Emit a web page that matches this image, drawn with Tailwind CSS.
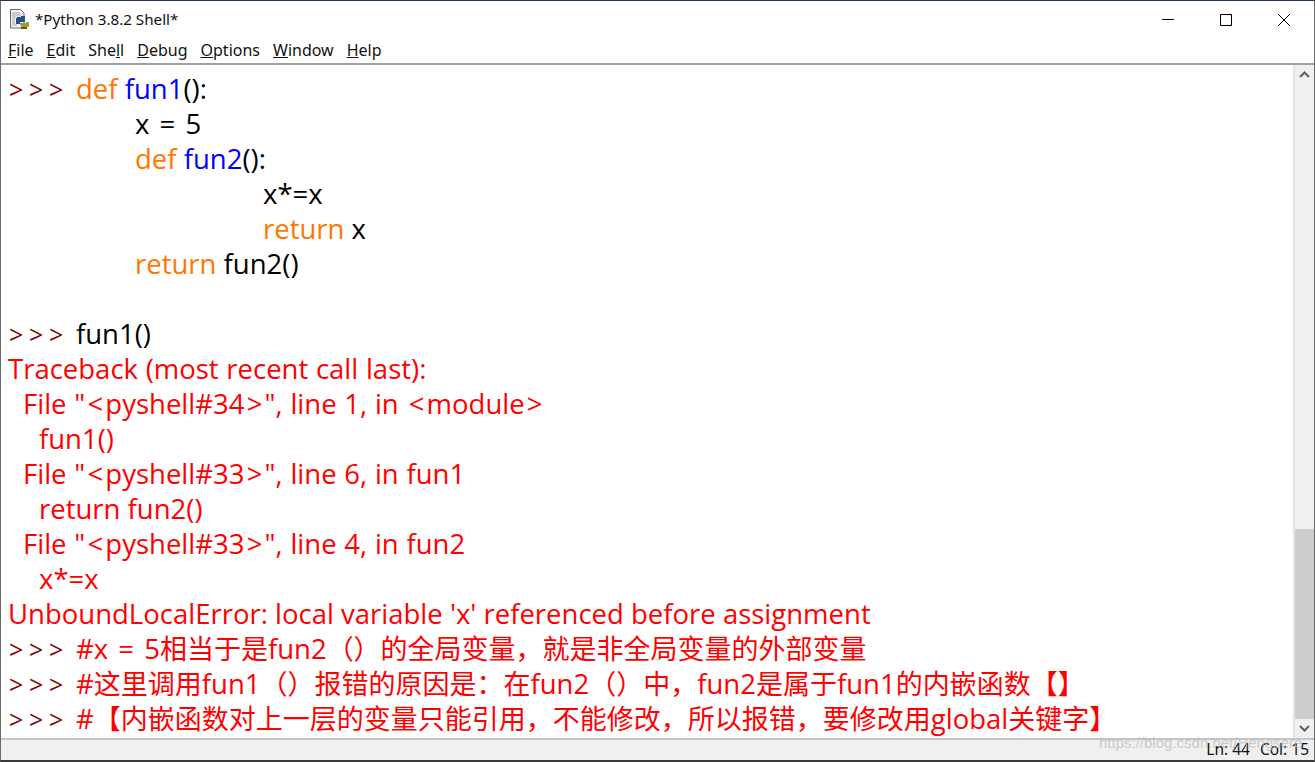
<!DOCTYPE html>
<html lang="en">
<head>
    <meta charset="UTF-8">
    <title>*Python 3.8.2 Shell*</title>
    <script src="https://cdn.jsdelivr.net/npm/@tailwindcss/browser@4"></script>
</head>
<body class="w-[1315px] h-[762px] overflow-hidden bg-white font-['Open_Sans','Noto_Sans_CJK_SC',sans-serif]">

<div class="flex flex-col h-[762px] border-t border-t-[#1f3556] border-x border-x-[#6b6b6b] border-b-2 border-b-[#3a3a3a]">

    <!-- title bar -->
    <div class="flex items-center h-[36px] pl-[9px] bg-white">
        <svg class="w-[20px] h-[21px]" viewBox="0 0 20 21">
            <path d="M.5.5h10l3.500 3.500v15H.5z" fill="#f4f4f4" stroke="#666"/>
            <path d="M2 4h8M2 6h9M2 8h4M2 10h3M2 12h3M2 14h3M2 16h5" stroke="#a5a5a5"/>
            <path d="M8 8h5a2 2 0 0 1 2 2v3h-5v2H6v-5a2 2 0 0 1 2-2z" fill="#234f8e"/>
            <path d="M11 7h4v2h-4z" fill="#234f8e"/>
            <path d="M16 13h2a1 1 0 0 1 1 1v3a1 1 0 0 1-1 1h-7v-2h-1v-2h6z" fill="#a39a2c"/>
            <path d="M11 18h6v2h-6z" fill="#5c5f1c"/>
        </svg>
        <span class="ml-[5px] text-[15.200px] text-[#111] font-['Noto_Sans',sans-serif]">*Python 3.8.2 Shell*</span>
        <div class="ml-auto flex items-center">
            <svg class="w-[58px] h-[36px]" viewBox="0 0 58 36"><path d="M23 18.500h12" stroke="#000"/></svg>
            <svg class="w-[58px] h-[36px]" viewBox="0 0 58 36"><path d="M23.500 13.500h11v11h-11z" fill="none" stroke="#000"/></svg>
            <svg class="w-[58px] h-[36px] mr-[1px]" viewBox="0 0 58 36"><path d="M23 13l12 12M35 13L23 25" stroke="#000"/></svg>
        </div>
    </div>

    <!-- menu bar -->
    <div class="flex items-center h-[26px] pl-[7px] gap-[13px] text-[16px] text-[#111] font-['Noto_Sans',sans-serif]">
        <span><u>F</u>ile</span>
        <span><u>E</u>dit</span>
        <span>She<u>l</u>l</span>
        <span><u>D</u>ebug</span>
        <span><u>O</u>ptions</span>
        <span><u>W</u>indow</span>
        <span><u>H</u>elp</span>
    </div>

    <!-- editor and scrollbar -->
    <div class="flex flex-1 min-h-0 border-t-2 border-t-[#a0a0a0]">
        <div class="flex-1 pt-[6px] text-[27.500px] leading-[35px] text-[#ff0000] overflow-hidden border-r-2 border-r-[#e3e3e3] [&>div]:whitespace-pre [&>div]:h-[35px]">
            <div class="pl-[8px]"><span class="inline-block w-[67px] text-[25px] tracking-[-0.4px] text-[#7f0000]">&gt; &gt; &gt;</span><span class="text-[#ff7700]">def</span> <span class="text-[#0000ff]">fun1</span><span class="text-black">():</span></div>
            <div class="pl-[134px] text-black [word-spacing:3px]">x = 5</div>
            <div class="pl-[134px] text-black"><span class="text-[#ff7700]">def</span> <span class="text-[#0000ff]">fun2</span>():</div>
            <div class="pl-[262px] text-black">x*=x</div>
            <div class="pl-[262px] text-black"><span class="text-[#ff7700]">return</span> x</div>
            <div class="pl-[134px] text-black"><span class="text-[#ff7700]">return</span> fun2()</div>
            <div></div>
            <div class="pl-[8px]"><span class="inline-block w-[67px] text-[25px] tracking-[-0.4px] text-[#7f0000]">&gt; &gt; &gt;</span><span class="text-black">fun1()</span></div>
            <div class="pl-[7px] [word-spacing:0.5px]">Traceback (most recent call last):</div>
            <div class="pl-[22px] [word-spacing:0.6px]">File "<span class="px-[2.200px]">&lt;</span>pyshell#34<span class="px-[2.200px]">&gt;</span>", line 1, in <span class="px-[2.200px]">&lt;</span>module<span class="px-[2.200px]">&gt;</span></div>
            <div class="pl-[38px]">fun1()</div>
            <div class="pl-[22px] [word-spacing:0.6px]">File "<span class="px-[2.200px]">&lt;</span>pyshell#33<span class="px-[2.200px]">&gt;</span>", line 6, in fun1</div>
            <div class="pl-[38px]">return fun2()</div>
            <div class="pl-[22px] [word-spacing:0.6px]">File "<span class="px-[2.200px]">&lt;</span>pyshell#33<span class="px-[2.200px]">&gt;</span>", line 4, in fun2</div>
            <div class="pl-[38px]">x*=x</div>
            <div class="pl-[7px]">UnboundLocalError: local variable 'x' referenced before assignment</div>
            <div class="pl-[8px]"><span class="inline-block w-[67px] text-[25px] tracking-[-0.4px] text-[#7f0000]">&gt; &gt; &gt;</span><span class="[word-spacing:3px]">#x = 5</span><span class="text-[27px]">相当于是</span>fun2<span class="text-[27px]">（）的全局变量，就是非全局变量的外部变量</span></div>
            <div class="pl-[8px]"><span class="inline-block w-[67px] text-[25px] tracking-[-0.4px] text-[#7f0000]">&gt; &gt; &gt;</span>#<span class="text-[27px]">这里调用</span>fun1<span class="text-[27px]">（）报错的原因是：在</span>fun2<span class="text-[27px]">（）中，</span>fun2<span class="text-[27px]">是属于</span>fun1<span class="text-[27px]">的内嵌函数【】</span></div>
            <div class="pl-[8px]"><span class="inline-block w-[67px] text-[25px] tracking-[-0.4px] text-[#7f0000]">&gt; &gt; &gt;</span>#<span class="text-[27px]">【内嵌函数对上一层的变量只能引用，不能修改，所以报错，要修改用</span>global<span class="text-[27px]">关键字】</span></div>
        </div>
        <div class="flex flex-col w-[19px] bg-[#f0f0f0]">
            <svg class="w-[19px] h-[19px]" viewBox="0 0 19 19"><path d="M5 12l4.500-4.500L14 12" fill="none" stroke="#606060" stroke-width="2"/></svg>
            <div class="flex-1"></div>
            <div class="h-[190px] bg-[#cdcdcd]"></div>
            <svg class="w-[19px] h-[19px]" viewBox="0 0 19 19"><path d="M5 7l4.500 4.500L14 7" fill="none" stroke="#606060" stroke-width="2"/></svg>
        </div>
    </div>

    <!-- status bar -->
    <div class="relative flex items-center justify-end h-[22px] pr-[5px] gap-[10px] bg-[#f0f0f0] border-t-2 border-t-[#c4c4c4] text-[15.500px] text-[#111] font-['Noto_Sans',sans-serif]">
        <span>Ln: 44</span>
        <span>Col: 15</span>
        <span class="absolute left-[1098px] top-[-8px] text-[15px] text-[#b9b9b9]/70 font-['Liberation_Sans',sans-serif]">https://blog.csdn.net/Hengsere</span>
    </div>
</div>

</body>
</html>
